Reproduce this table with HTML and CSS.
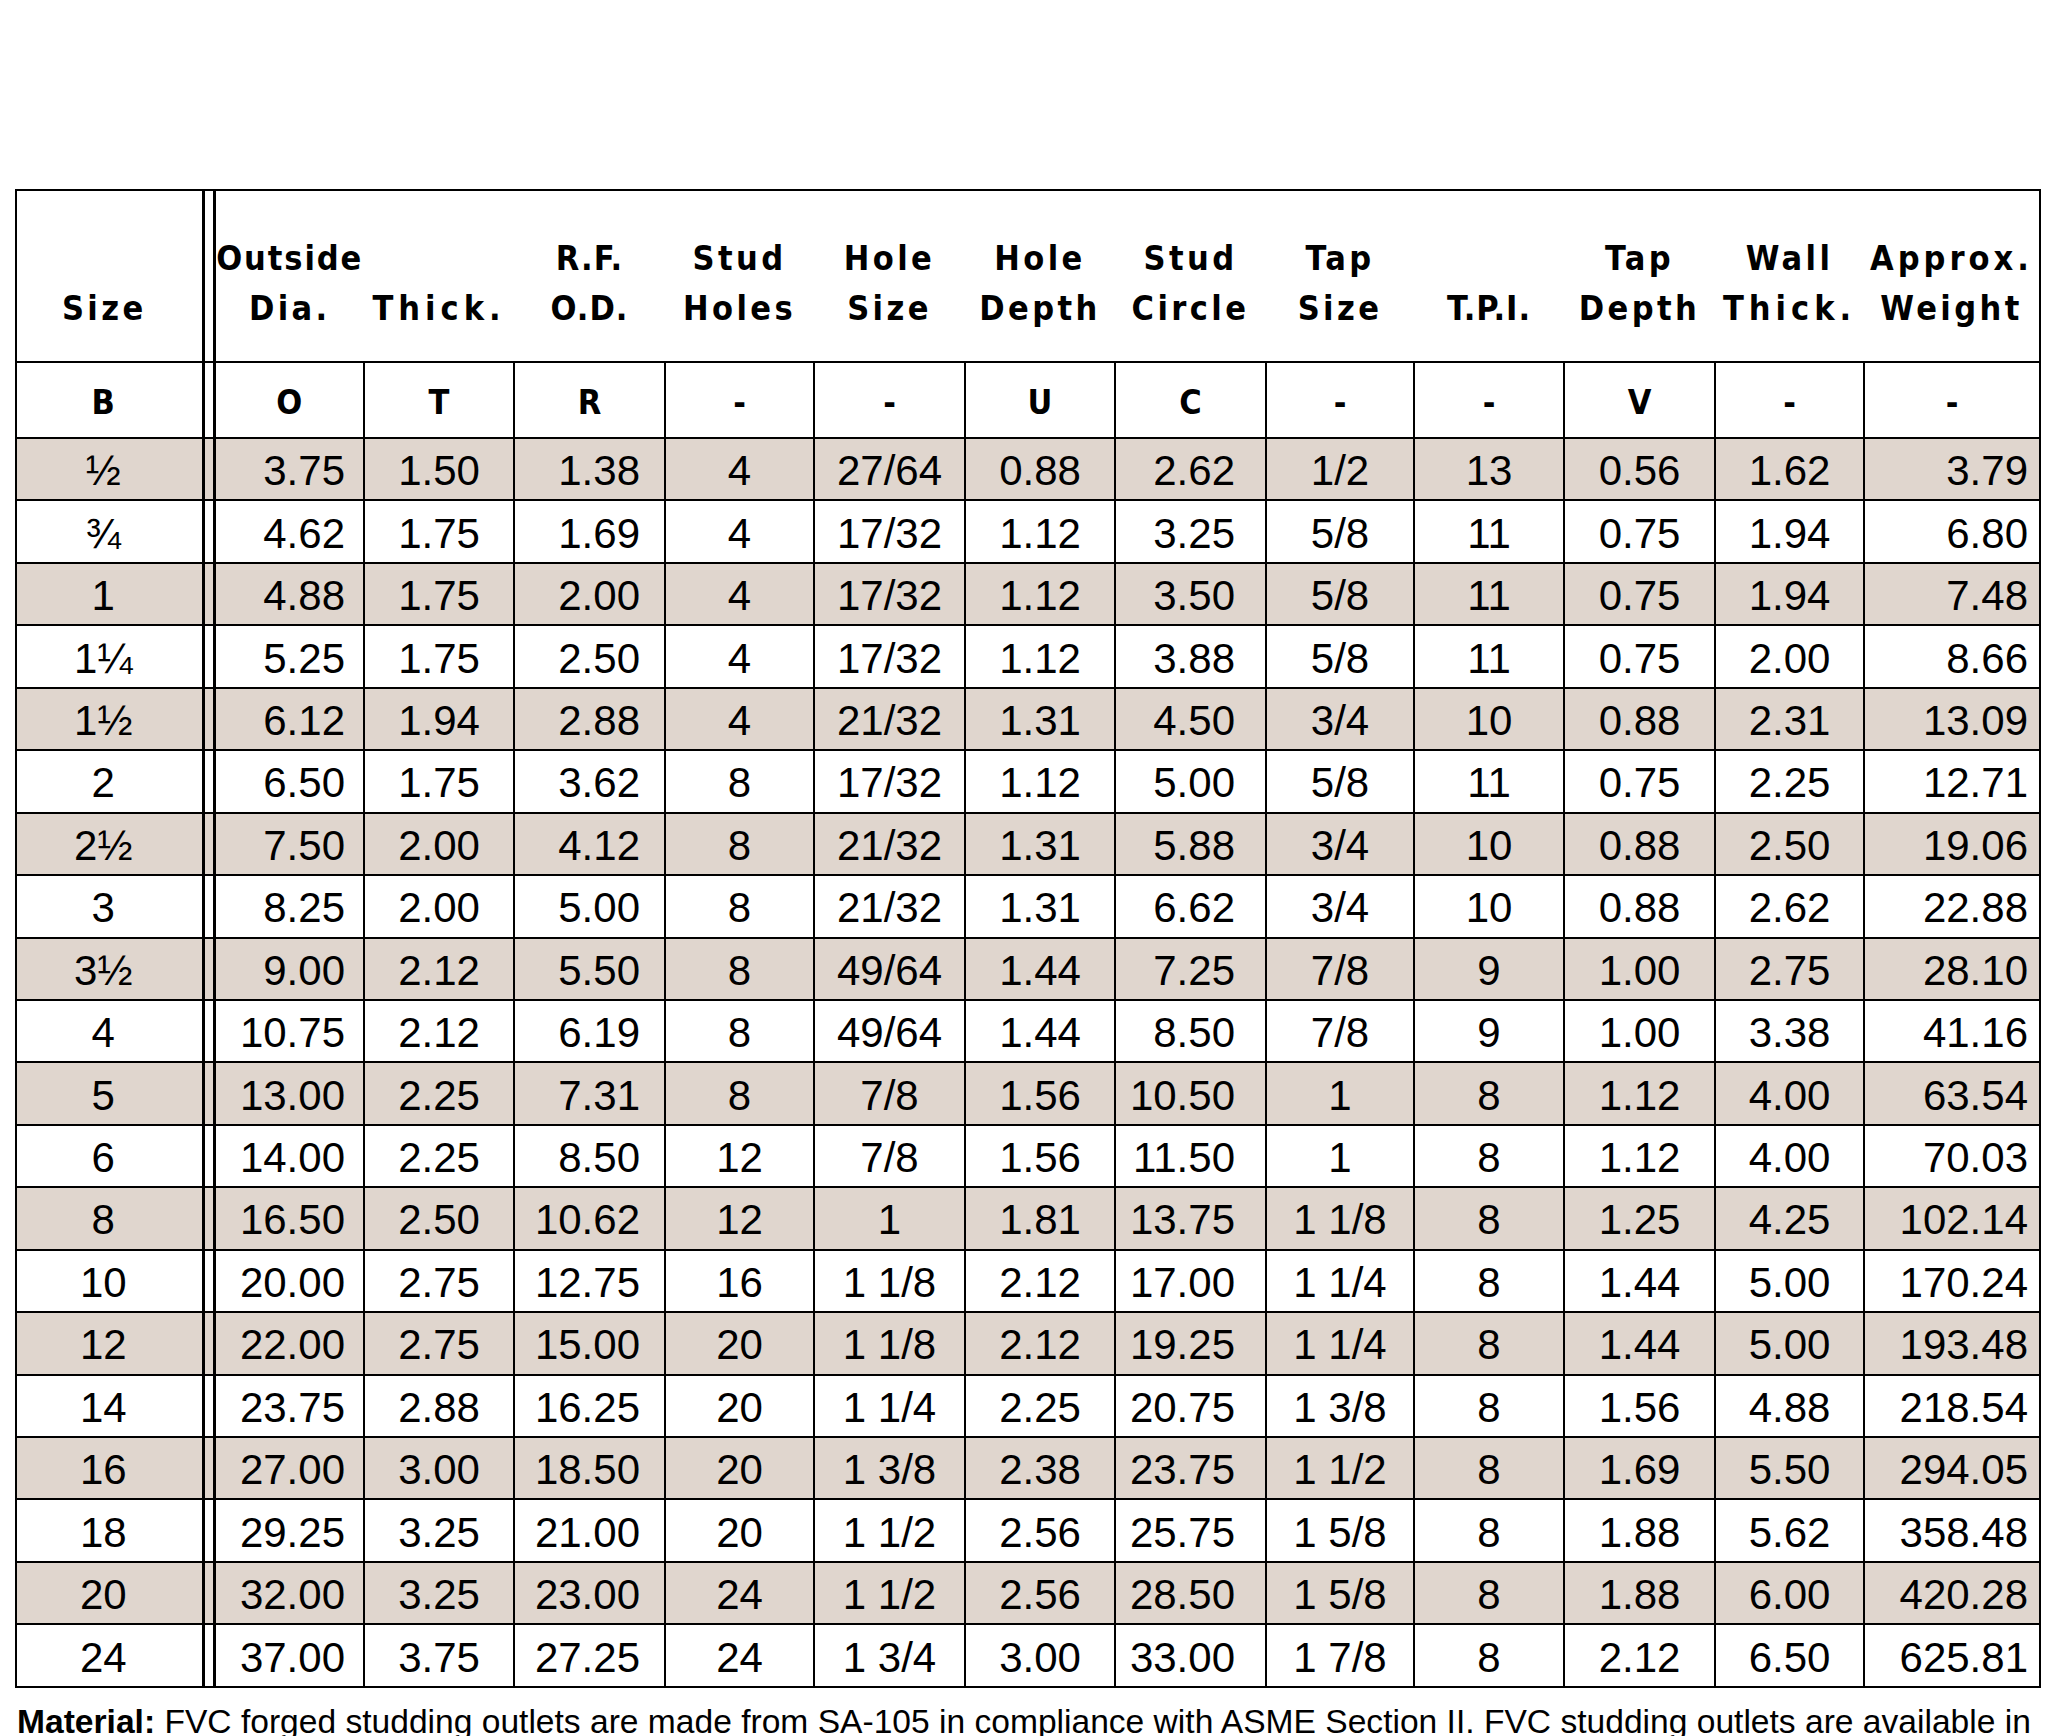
FILE: index.html
```html
<!DOCTYPE html>
<html lang="en">
<head>
<meta charset="utf-8">
<title>Studding Outlet Dimensions</title>
<link rel="stylesheet" href="styles.css">
</head>
<body>
<div class="page">
<table class="spec">
  <colgroup>
    <col class="w-size"><col class="w-gap"><col class="w-o"><col class="w-t"><col class="w-r"><col class="w-sh"><col class="w-hs"><col class="w-u"><col class="w-c"><col class="w-ts"><col class="w-tpi"><col class="w-v"><col class="w-wall"><col class="w-wt">
  </colgroup>
  <thead>
    <tr class="head">
      <th class="h-size"><span class="ls">Size</span></th>
      <th class="gap"></th>
      <th><span class="ls2">Outside</span><br><span class="ls">Dia.</span></th>
      <th><span class="ls5">Thick.</span></th>
      <th><span class="ls1">R.F.</span><br><span class="ls1">O.D.</span></th>
      <th><span class="ls">Stud</span><br><span class="ls">Holes</span></th>
      <th><span class="ls">Hole</span><br><span class="ls">Size</span></th>
      <th><span class="ls">Hole</span><br><span class="ls">Depth</span></th>
      <th><span class="ls">Stud</span><br><span class="ls">Circle</span></th>
      <th><span class="ls">Tap</span><br><span class="ls">Size</span></th>
      <th><span class="ls1">T.P.I.</span></th>
      <th><span class="ls">Tap</span><br><span class="ls">Depth</span></th>
      <th><span class="ls">Wall</span><br><span class="ls5">Thick.</span></th>
      <th class="h-last"><span class="ls4">Approx.</span><br><span class="ls">Weight</span></th>
    </tr>
    <tr class="letters">
      <th class="c-size">B</th><th class="gap"></th><th>O</th><th>T</th><th>R</th><th>-</th><th>-</th><th>U</th><th>C</th><th>-</th><th>-</th><th>V</th><th>-</th><th>-</th>
    </tr>
  </thead>
  <tbody>
    <tr class="sh"><td class="c-size">½</td><td class="gap"></td><td class="r-o">3.75</td><td>1.50</td><td class="r-r">1.38</td><td>4</td><td>27/64</td><td>0.88</td><td class="r-c">2.62</td><td>1/2</td><td>13</td><td>0.56</td><td>1.62</td><td class="r-w">3.79</td></tr>
    <tr><td class="c-size">¾</td><td class="gap"></td><td class="r-o">4.62</td><td>1.75</td><td class="r-r">1.69</td><td>4</td><td>17/32</td><td>1.12</td><td class="r-c">3.25</td><td>5/8</td><td>11</td><td>0.75</td><td>1.94</td><td class="r-w">6.80</td></tr>
    <tr class="sh"><td class="c-size">1</td><td class="gap"></td><td class="r-o">4.88</td><td>1.75</td><td class="r-r">2.00</td><td>4</td><td>17/32</td><td>1.12</td><td class="r-c">3.50</td><td>5/8</td><td>11</td><td>0.75</td><td>1.94</td><td class="r-w">7.48</td></tr>
    <tr><td class="c-size">1¼</td><td class="gap"></td><td class="r-o">5.25</td><td>1.75</td><td class="r-r">2.50</td><td>4</td><td>17/32</td><td>1.12</td><td class="r-c">3.88</td><td>5/8</td><td>11</td><td>0.75</td><td>2.00</td><td class="r-w">8.66</td></tr>
    <tr class="sh"><td class="c-size">1½</td><td class="gap"></td><td class="r-o">6.12</td><td>1.94</td><td class="r-r">2.88</td><td>4</td><td>21/32</td><td>1.31</td><td class="r-c">4.50</td><td>3/4</td><td>10</td><td>0.88</td><td>2.31</td><td class="r-w">13.09</td></tr>
    <tr><td class="c-size">2</td><td class="gap"></td><td class="r-o">6.50</td><td>1.75</td><td class="r-r">3.62</td><td>8</td><td>17/32</td><td>1.12</td><td class="r-c">5.00</td><td>5/8</td><td>11</td><td>0.75</td><td>2.25</td><td class="r-w">12.71</td></tr>
    <tr class="sh"><td class="c-size">2½</td><td class="gap"></td><td class="r-o">7.50</td><td>2.00</td><td class="r-r">4.12</td><td>8</td><td>21/32</td><td>1.31</td><td class="r-c">5.88</td><td>3/4</td><td>10</td><td>0.88</td><td>2.50</td><td class="r-w">19.06</td></tr>
    <tr><td class="c-size">3</td><td class="gap"></td><td class="r-o">8.25</td><td>2.00</td><td class="r-r">5.00</td><td>8</td><td>21/32</td><td>1.31</td><td class="r-c">6.62</td><td>3/4</td><td>10</td><td>0.88</td><td>2.62</td><td class="r-w">22.88</td></tr>
    <tr class="sh"><td class="c-size">3½</td><td class="gap"></td><td class="r-o">9.00</td><td>2.12</td><td class="r-r">5.50</td><td>8</td><td>49/64</td><td>1.44</td><td class="r-c">7.25</td><td>7/8</td><td>9</td><td>1.00</td><td>2.75</td><td class="r-w">28.10</td></tr>
    <tr><td class="c-size">4</td><td class="gap"></td><td class="r-o">10.75</td><td>2.12</td><td class="r-r">6.19</td><td>8</td><td>49/64</td><td>1.44</td><td class="r-c">8.50</td><td>7/8</td><td>9</td><td>1.00</td><td>3.38</td><td class="r-w">41.16</td></tr>
    <tr class="sh"><td class="c-size">5</td><td class="gap"></td><td class="r-o">13.00</td><td>2.25</td><td class="r-r">7.31</td><td>8</td><td>7/8</td><td>1.56</td><td class="r-c">10.50</td><td>1</td><td>8</td><td>1.12</td><td>4.00</td><td class="r-w">63.54</td></tr>
    <tr><td class="c-size">6</td><td class="gap"></td><td class="r-o">14.00</td><td>2.25</td><td class="r-r">8.50</td><td>12</td><td>7/8</td><td>1.56</td><td class="r-c">11.50</td><td>1</td><td>8</td><td>1.12</td><td>4.00</td><td class="r-w">70.03</td></tr>
    <tr class="sh"><td class="c-size">8</td><td class="gap"></td><td class="r-o">16.50</td><td>2.50</td><td class="r-r">10.62</td><td>12</td><td>1</td><td>1.81</td><td class="r-c">13.75</td><td>1 1/8</td><td>8</td><td>1.25</td><td>4.25</td><td class="r-w">102.14</td></tr>
    <tr><td class="c-size">10</td><td class="gap"></td><td class="r-o">20.00</td><td>2.75</td><td class="r-r">12.75</td><td>16</td><td>1 1/8</td><td>2.12</td><td class="r-c">17.00</td><td>1 1/4</td><td>8</td><td>1.44</td><td>5.00</td><td class="r-w">170.24</td></tr>
    <tr class="sh"><td class="c-size">12</td><td class="gap"></td><td class="r-o">22.00</td><td>2.75</td><td class="r-r">15.00</td><td>20</td><td>1 1/8</td><td>2.12</td><td class="r-c">19.25</td><td>1 1/4</td><td>8</td><td>1.44</td><td>5.00</td><td class="r-w">193.48</td></tr>
    <tr><td class="c-size">14</td><td class="gap"></td><td class="r-o">23.75</td><td>2.88</td><td class="r-r">16.25</td><td>20</td><td>1 1/4</td><td>2.25</td><td class="r-c">20.75</td><td>1 3/8</td><td>8</td><td>1.56</td><td>4.88</td><td class="r-w">218.54</td></tr>
    <tr class="sh"><td class="c-size">16</td><td class="gap"></td><td class="r-o">27.00</td><td>3.00</td><td class="r-r">18.50</td><td>20</td><td>1 3/8</td><td>2.38</td><td class="r-c">23.75</td><td>1 1/2</td><td>8</td><td>1.69</td><td>5.50</td><td class="r-w">294.05</td></tr>
    <tr><td class="c-size">18</td><td class="gap"></td><td class="r-o">29.25</td><td>3.25</td><td class="r-r">21.00</td><td>20</td><td>1 1/2</td><td>2.56</td><td class="r-c">25.75</td><td>1 5/8</td><td>8</td><td>1.88</td><td>5.62</td><td class="r-w">358.48</td></tr>
    <tr class="sh"><td class="c-size">20</td><td class="gap"></td><td class="r-o">32.00</td><td>3.25</td><td class="r-r">23.00</td><td>24</td><td>1 1/2</td><td>2.56</td><td class="r-c">28.50</td><td>1 5/8</td><td>8</td><td>1.88</td><td>6.00</td><td class="r-w">420.28</td></tr>
    <tr><td class="c-size">24</td><td class="gap"></td><td class="r-o">37.00</td><td>3.75</td><td class="r-r">27.25</td><td>24</td><td>1 3/4</td><td>3.00</td><td class="r-c">33.00</td><td>1 7/8</td><td>8</td><td>2.12</td><td>6.50</td><td class="r-w">625.81</td></tr>
  </tbody>
</table>
<p class="note"><b>Material:</b> FVC forged studding outlets are made from SA-105 in compliance with ASME Section II. FVC studding outlets are available in</p>
</div>
</body>
</html>
```
FILE: styles.css
```css
html {
  overflow: hidden;
  background: #ffffff;
}

body {
  margin: 0;
  background: #ffffff;
  color: #000000;
  font-family: "Liberation Sans", Arial, sans-serif;
}

.page {
  padding: 189px 0 0 15px;
}

.spec {
  border-collapse: collapse;
  table-layout: fixed;
  width: 2026px;
}

.w-size { width: 187px; }
.w-gap { width: 11px; }
.w-o { width: 150px; }
.w-t { width: 150px; }
.w-r { width: 151px; }
.w-sh { width: 149px; }
.w-hs { width: 151px; }
.w-u { width: 150px; }
.w-c { width: 151px; }
.w-ts { width: 148px; }
.w-tpi { width: 150px; }
.w-v { width: 151px; }
.w-wall { width: 149px; }
.w-wt { width: 176px; }

.spec th,
.spec td {
  border: 2px solid #000;
  padding: 0;
  overflow: visible;
  white-space: nowrap;
}

.spec th {
  font-family: "DejaVu Sans Condensed", "DejaVu Sans", sans-serif;
  font-stretch: condensed;
  font-weight: bold;
  font-size: 34px;
  text-align: center;
}

.spec .gap {
  border-left: 3px solid #000;
  border-right: 3px solid #000;
}

.head {
  height: 172px;
}

.head th {
  border-left: none;
  border-right: none;
  vertical-align: bottom;
  line-height: 50px;
  padding-bottom: 28px;
}

.head th.h-size {
  border-left: 2px solid #000;
  padding-right: 10px;
}

.head th.gap {
  border-left: 3px solid #000;
  border-right: 3px solid #000;
}

.head th.h-last {
  border-right: 2px solid #000;
}

.ls { letter-spacing: 3.4px; }
.ls2 { letter-spacing: 1.9px; }
.ls4 { letter-spacing: 4px; }
.ls5 { letter-spacing: 5px; }
.ls1 { letter-spacing: 1px; }

.letters {
  height: 76px;
}

.letters th {
  vertical-align: middle;
  line-height: 1;
  padding-top: 4px;
}

.spec tbody tr {
  height: 62.45px;
}

.spec td {
  font-size: 42px;
  line-height: 1;
  text-align: center;
  vertical-align: middle;
  padding-top: 4px;
}

.spec tr.sh td {
  background: #e0d6ce;
}

.c-size {
  padding-right: 12px !important;
}

.spec td.r-o { text-align: right; padding-right: 18px; }
.spec td.r-r { text-align: right; padding-right: 24px; }
.spec td.r-c { text-align: right; padding-right: 30px; }
.spec td.r-w { text-align: right; padding-right: 11px; }

.note {
  margin: 15px 0 0 2px;
  font-size: 33.6px;
  line-height: 38px;
  white-space: nowrap;
}

.note b {
  font-weight: bold;
}
```
